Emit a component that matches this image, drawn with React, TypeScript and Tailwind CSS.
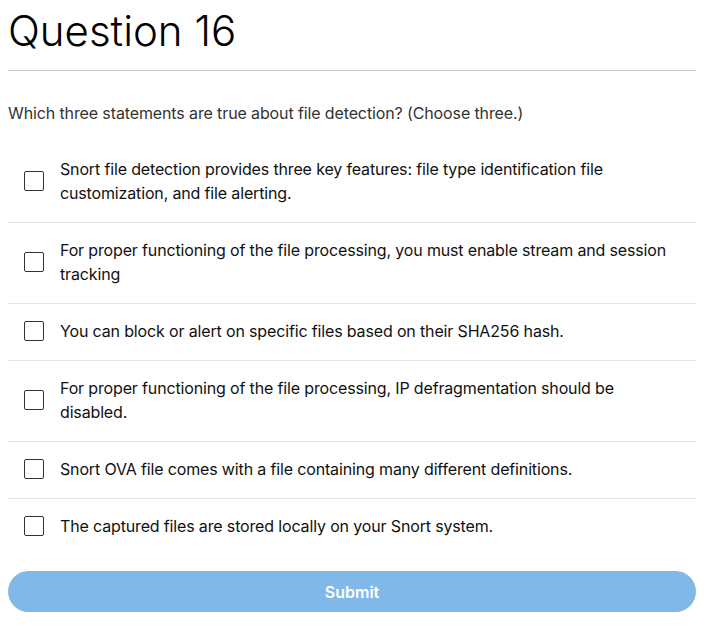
const options = [
  "Snort file detection provides three key features: file type identification file customization, and file alerting.",
  "For proper functioning of the file processing, you must enable stream and session tracking",
  "You can block or alert on specific files based on their SHA256 hash.",
  "For proper functioning of the file processing, IP defragmentation should be disabled.",
  "Snort OVA file comes with a file containing many different definitions.",
  "The captured files are stored locally on your Snort system.",
];

function OptionRow({ text, last }: { text: string; last: boolean }) {
  return (
    <label
      className={
        last
          ? "flex items-center gap-4 px-4 pt-[15px] pb-[17px] cursor-pointer"
          : "flex items-center gap-4 px-4 pt-[15px] pb-[17px] border-b border-[#e5e5e5] cursor-pointer"
      }
    >
      <span className="w-5 h-5 shrink-0 rounded-[2px] border border-[#333] bg-white" />
      <span className="text-base leading-6 tracking-[-0.15px] text-[#111]">{text}</span>
    </label>
  );
}

export default function App() {
  return (
    <div className="bg-white pl-2 pr-[10px] font-['Inter',sans-serif]" style={{ width: 706 }}>
      <h1 className="pt-[7px] pb-[15px] text-[42px] leading-[48px] font-light text-black">Question 16</h1>
      <div className="border-t border-[#c8c8c8]" />
      <p className="mt-[30px] text-[16px] leading-6 tracking-[-0.12px] text-[#333]">
        Which three statements are true about file detection? (Choose three.)
      </p>
      <div className="mt-[17px] flex flex-col">
        {options.map((o, i) => (
          <OptionRow key={i} text={o} last={i === options.length - 1} />
        ))}
      </div>
      <button className="mt-4 w-full h-[41px] rounded-full bg-[#80b9e9] text-white font-semibold text-base">
        Submit
      </button>
    </div>
  );
}
